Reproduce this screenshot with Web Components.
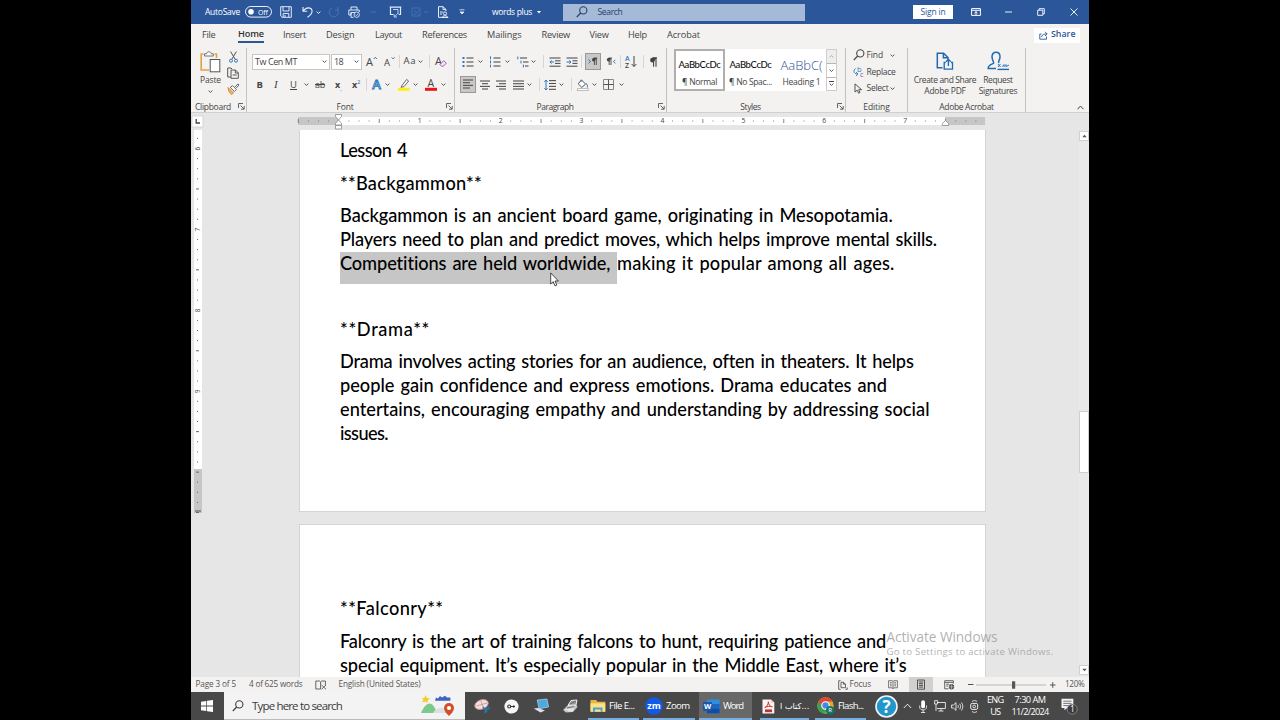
<!DOCTYPE html>
<html lang="en">
<head>
<meta charset="utf-8">
<title>words plus</title>
<style>
  body {
    margin: 0;
    width: 1280px;
    height: 720px;
    overflow: hidden;
    background: #000;
    font-family: "Open Sans", "Noto Sans", sans-serif;
    font-size: 8.5px;
    color: #444;
  }
</style>
</head>
<body>
<word-window></word-window>

<script>
const chev = '<path d="M.6 .6 2.5 2.4 4.4 .6" stroke="currentColor" fill="none" stroke-width=".9"/>';
const lines = (arr, color = '#505050') =>
  arr.map(([x1, x2, y]) => `<path d="M${x1} ${y}H${x2}" stroke="${color}" stroke-width="1.1"/>`).join('');

// name: [width, height, markup]
const ICONS = {
  chev: [5, 3, chev],
  launch: [7, 7, '<path d="M.5 5V.5H5M2.5 2.5 6 6M6.2 3V6.2H3" fill="none" stroke="#555" stroke-width=".9"/>'],
  toggle: [27, 12, '<rect x=".5" y=".5" width="26" height="10.6" rx="5.3" fill="none" stroke="#fff" stroke-width=".9"/><circle cx="6" cy="5.8" r="2.8" fill="#fff"/><text x="13" y="8.6" font-size="7.6" fill="#fff" textLength="10" lengthAdjust="spacingAndGlyphs">Off</text>'],
  save: [12, 12, '<path d="M.7 .7H11.3V11.3H2L.7 10ZM3 .7V5H9V.7M3.2 11V7.5H8.8V11M5 9V11" fill="none" stroke="#dfe9f7" stroke-width="1"/>'],
  undo: [12, 12, '<path d="M1 1V5.2H5.2M1.3 5C4 .8 9 1 10 4.3 10.8 7.5 8 9.5 5.5 11.3" fill="none" stroke="#e6eefa" stroke-width="1.1"/>'],
  redo: [12, 12, '<path d="M10 1V4H7M9.8 4A4.6 4.6 0 1 1 4 2" fill="none" stroke="#4a73b5" stroke-width="1"/>'],
  print: [12, 12, '<path d="M3 4V1H9V4M3 9H.8V4H11.2V6M3 9V6.5H7" fill="none" stroke="#dfe9f7"/><path d="M3 6.5V11.3H5.5" fill="none" stroke="#dfe9f7"/><circle cx="8.7" cy="8.7" r="2.7" fill="#2b579a" stroke="#dfe9f7" stroke-width=".9"/><path d="M7.4 8.7 8.4 9.7 10 7.9" fill="none" stroke="#dfe9f7" stroke-width=".8"/>'],
  present: [13, 12, '<path d="M.7 1.2H12.3M1.5 1.2V8.5H4.5M11.5 1.2V8.5H9.7" fill="none" stroke="#dfe9f7" stroke-width="1.2"/><path d="M4 3.5H9V8M8.8 7.5 5.4 10.8M5.2 8.3V11H8" fill="none" stroke="#bdd0ec"/>'],
  ghost: [18, 10, '<path d="M1 1H9V9H1ZM3 3 8 8M8 3 3 8M13 5H17" fill="none" stroke="#446fb2"/>'],
  dash: [6, 2, '<path d="M0 1H6" stroke="#446fb2"/>'],
  page: [12, 12, '<path d="M1.5 .7H6L9 3.5V5M1.5 .7V11.3H5M6 .7V3.5H9M3 6H6M3 8H5" fill="none" stroke="#e6eefa"/><circle cx="8" cy="7.5" r="1.6" fill="none" stroke="#e6eefa"/><path d="M5 11.5C5.5 9.3 10.5 9.3 11 11.5Z" fill="none" stroke="#e6eefa"/>'],
  more: [6, 6, '<path d="M.5 .8H5.5M1 3 3 5 5 3Z" fill="#e6eefa" stroke="#e6eefa" stroke-width=".8"/>'],
  caret: [4, 3, '<path d="M0 0H4L2 2.4Z" fill="#fff"/>'],
  find: [12, 12, '<circle cx="7.3" cy="4.4" r="3.6" fill="none" stroke="currentColor" stroke-width="1.1"/><path d="M4.7 7 .8 11" stroke="currentColor" stroke-width="1.1"/>'],
  ribbonOpts: [10, 8, '<path d="M.6 .6H9.4V7.4H.6ZM.6 2.3H9.4M5 7V3.7M3.4 5 5 3.6 6.6 5" fill="none" stroke="#fff" stroke-width="1"/>'],
  min: [7, 2, '<path d="M0 1H7" stroke="#fff" stroke-width=".9"/>'],
  restore: [8, 8, '<path d="M.7 2.2H5.8V7.3H.7ZM2.2 2V.7H7.3V5.8H6" fill="none" stroke="#fff" stroke-width=".9"/>'],
  close: [8, 8, '<path d="M.5 .5 7.5 7.5M7.5 .5 .5 7.5" stroke="#fff" stroke-width=".9"/>'],
  share: [9, 9, '<path d="M2.5 3H.8V8.2H7.5V5.5M2.6 6C3 3.5 5 3 8 3M6 .8 8.2 3 6 5" fill="none" stroke="#2b579a" stroke-width=".9"/>'],
  paste: [21, 22, '<path d="M3.5 3H1.2V19H9M14.5 3H16.5V7" fill="none" stroke="#e3a04b" stroke-width="1.6"/><path d="M4.5 5V2.8H6.5C7 0 10.8 0 11.3 2.8H13.3V5Z" fill="#fafafa" stroke="#666" stroke-width=".9"/><rect x="10.2" y="8.5" width="9.6" height="12.3" fill="#fff" stroke="#555"/>'],
  cut: [9, 12, '<path d="M1.6 .5 6 8M7.4 .5 3 8" stroke="#555" fill="none"/><circle cx="2" cy="9.7" r="1.5" fill="none" stroke="#2c77bd"/><circle cx="7" cy="9.7" r="1.5" fill="none" stroke="#2c77bd"/>'],
  copy: [12, 12, '<path d="M4 10H.7V1H4L5 2M4 3H8.5L11.3 5.8V11.3H4ZM8.3 3V6H11.3M5.7 8H9.6" fill="none" stroke="#555"/>'],
  painter: [13, 12, '<path d="M1 4.5 6.5 10 4.5 11.5 2 8.8Z" fill="#f3b66b" stroke="#e08a2c"/><path d="M3.3 4.5 5.5 2.7 9.3 6.5 7.4 8.5Z" fill="#fff" stroke="#555" stroke-width=".9"/><path d="M7.5 4.5 11 .9 12 2 8.6 5.6" fill="#fff" stroke="#555" stroke-width=".9"/>'],
  growA: [12, 12, '<path d="M7.7 3 9.3 1.4 10.9 3" fill="none" stroke="#2b579a" stroke-width=".9"/><text x="0" y="10" font-size="11" fill="#444">A</text>'],
  shrinkA: [12, 12, '<path d="M7.7 1.4 9.2 2.9 10.7 1.4" fill="none" stroke="#2b579a" stroke-width=".9"/><text x="0" y="10" font-size="9.5" fill="#444">A</text>'],
  clearA: [13, 13, '<text x="0" y="9.5" font-size="11" fill="#444">A</text><path d="M5 9.5 8.7 5.7 11.3 8.2 8.2 11.3H6.7Z" fill="#f3e4f6" stroke="#a04fae" stroke-width=".9"/>'],
  fxA: [12, 13, '<text x="1.2" y="11" font-size="13" font-weight="600" fill="#d7ebfb" stroke="#2476bd" stroke-width=".9">A</text>'],
  hilite: [13, 13, '<path d="M4 7.5 8.6 1.5 10.6 3 6 8.6 3 9.4Z" fill="#fff" stroke="#555" stroke-width=".9"/><rect x="0" y="9.8" width="11.5" height="3" fill="#ffee16"/>'],
  colorA: [13, 13, '<text x="2.6" y="8.6" font-size="10.5" fill="#444">A</text><rect x="0" y="9.8" width="12" height="3" fill="#e8141c"/>'],
  bullets: [12, 12, lines([[4.5, 11.5, 2], [4.5, 11.5, 6], [4.5, 11.5, 10]]) + '<path d="M.5 2H2.5M.5 6H2.5M.5 10H2.5" stroke="#2c77bd" stroke-width="2"/>'],
  numbers: [12, 12, lines([[4.5, 11.5, 2], [4.5, 11.5, 6], [4.5, 11.5, 10]]) + '<path d="M1.5 .4V3.4M1.5 4.6V7.4M1.5 8.6V11.4" stroke="#2c77bd"/>'],
  multi: [12, 12, lines([[3, 10, 2], [6, 11.5, 6], [8, 11.5, 10]]) + '<path d="M.8 .5V3.3M4 4.6V7.4M6.4 8.6V11.4" stroke="#2c77bd"/>'],
  outdent: [12, 10, lines([[.5, 11.5, 1], [6, 11.5, 3.8], [6, 11.5, 6.4], [.5, 11.5, 9.2]]) + '<path d="M5 5H1M2.6 3.3 .9 5 2.6 6.7" fill="none" stroke="#2c77bd"/>'],
  indent: [12, 10, lines([[.5, 11.5, 1], [6.5, 11.5, 3.8], [6.5, 11.5, 6.4], [.5, 11.5, 9.2]]) + '<path d="M.5 5H5M3.3 3.3 5 5 3.3 6.7" fill="none" stroke="#2c77bd"/>'],
  ltr: [16, 17, '<rect width="16" height="17" fill="#c9c8c7"/><rect x=".5" y=".5" width="15" height="16" fill="none" stroke="#999"/><path d="M3.5 6.5 5.5 8.4 3.5 10.3" fill="none" stroke="#2c77bd"/><path d="M11.6 5H8.7A1.7 1.7 0 0 0 8.7 8.4H9.5Z" fill="#444"/><path d="M12.2 5H8.7M9.4 5V12M11.3 5V12" fill="none" stroke="#444" stroke-width=".9"/>'],
  rtl: [10, 9, '<path d="M9.3 2.8 7.5 4.6 9.3 6.4" fill="none" stroke="#2c77bd"/><path d="M5.2 1H2.5A1.7 1.7 0 0 0 2.5 4.4H3.3Z" fill="#444"/><path d="M6 1H2.5M3.2 1V8M5 1V8" fill="none" stroke="#444" stroke-width=".9"/>'],
  sort: [13, 13, '<text x="0" y="6" font-size="7" font-weight="600" fill="#2c77bd">A</text><text x="0" y="12.5" font-size="7" font-weight="600" fill="#444">Z</text><path d="M9 1V11.5M6.6 9 9 11.5 11.4 9" fill="none" stroke="#444"/>'],
  pilcrow: [9, 10, '<path d="M7.6 .8H3.5A2.4 2.4 0 0 0 3.5 5.6H4.5Z" fill="#444"/><path d="M8 .8H3.5M4.6 .8V9.8M7 .8V9.8" fill="none" stroke="#444" stroke-width="1.1"/>'],
  alignL: [16, 17, '<rect width="16" height="17" fill="#c9c8c7"/><rect x=".5" y=".5" width="15" height="16" fill="none" stroke="#999"/>' + lines([[3, 13, 4], [3, 10, 6.7], [3, 13, 9.4], [3, 10, 12]])],
  alignC: [11, 10, lines([[0, 10, 1], [2, 8, 3.7], [0, 10, 6.4], [2, 8, 9]])],
  alignR: [11, 10, lines([[0, 10, 1], [3, 10, 3.7], [0, 10, 6.4], [3, 10, 9]])],
  alignJ: [11, 10, lines([[0, 11, 1], [0, 11, 3.7], [0, 11, 6.4], [0, 11, 9]])],
  spacing: [12, 12, lines([[5, 12, 1.6], [5, 12, 4.5], [5, 12, 7.4], [5, 12, 10.3]]) + '<path d="M2 1V11M.4 2.8 2 1 3.6 2.8M.4 9.2 2 11 3.6 9.2" fill="none" stroke="#2c77bd"/>'],
  shading: [12, 12, '<path d="M4.5 1 8.6 5 4.8 8.4 1.2 4.8Z" fill="#fff" stroke="#555"/><path d="M4 3V.8M9 4.5C10.6 5.2 10.6 7 10.3 8.6" fill="none" stroke="#2c77bd"/><rect x=".4" y="9.7" width="10.8" height="2" fill="#fff" stroke="#999" stroke-width=".6"/>'],
  borders: [11, 11, '<path d="M.5 .5H10.5V10.5H.5Z" fill="none" stroke="#888"/><path d="M5.5 .5V10.5M.5 5.5H10.5" stroke="#555"/>'],
  replace: [12, 12, '<text x="4" y="6" font-size="7.5" fill="#2c77bd">b</text><text x="7" y="11" font-size="7.5" fill="#8a50a8">c</text><path d="M2.6 2.5C0 4 .5 8 4.5 8M3 6 5 8 3 10" fill="none" stroke="#2c77bd" stroke-width=".9"/>'],
  select: [9, 11, '<path d="M1 .9V9L3.2 7.2 4.6 10.2 6 9.5 4.7 6.7H7.6Z" fill="none" stroke="#444" stroke-width=".9"/>'],
  pdf: [18, 19, '<path d="M6.5 15.8H1.3V1.2H7.6L12 5.5V7.8M7.4 1.2V5.7H12" fill="none" stroke="#1f69b3" stroke-width="1.5"/><path d="M9.7 10.5H8.2V17.2H16.5V10.5H15M12.4 14V7.8M10 9.7 12.4 7.4 14.8 9.7" fill="none" stroke="#1f69b3" stroke-width="1.3"/>'],
  sign: [23, 20, '<path d="M1.2 17C1.3 14 4.5 13.3 6.5 12.3 7.5 11.5 5 9.5 5 5.7 5 2.8 6.8 1.2 9 1.2S13 2.8 13 5.7C13 9.5 10.5 10.5 12 12M1.2 17V17.6H9" fill="none" stroke="#1f69b3" stroke-width="1.5"/><path d="M10.5 18.4H22" stroke="#1f69b3" stroke-width="1.4"/><path d="M11 13 13.5 16M13.5 13 11 16M15 15.7 17 13.6V15.6L19 13.6V15.6L22 14" fill="none" stroke="#1f69b3" stroke-width=".9"/>'],
  up: [7, 5, '<path d="M.6 4.2 3.5 1 6.4 4.2" fill="none" stroke="#444"/>'],
  proof: [12, 10, '<path d="M5.6 9H.8V1H4.5L5.6 2V9M5.6 2 6.8 1H10.4V5M6.5 5 11 9.3M11 5 6.5 9.3" fill="none" stroke="#555" stroke-width=".9"/>'],
  focus: [10, 10, '<path d="M2.6 .7H.7V9.3H2.6M7.4 9.3H9.3V7.5M3 2.3H5.5L7.5 4.2V7.7H3Z M5.5 2.3V4.2H7.5" fill="none" stroke="#555" stroke-width=".9"/>'],
  read: [10, 9, '<path d="M5 1.6V8.6M5 1.4 4 .7H.6V7.8H4L5 8.6 6 7.8H9.4V.7H6ZM2 2.6H3.7M2 4.2H3.7M2 5.8H3.7M6.3 2.6H8M6.3 4.2H8M6.3 5.8H8" fill="none" stroke="#555" stroke-width=".8"/>'],
  printView: [24, 15, '<rect width="24" height="15" fill="#d2d0ce"/><path d="M8.5 3H15.5V12.2H8.5ZM10 5H14M10 6.7H14M10 8.4H14M10 10.1H14" fill="none" stroke="#444" stroke-width=".9"/>'],
  web: [11, 10, '<path d="M4.5 8.8H.7V.7H9.3V3.5M.7 2.4H9.3M2.2 4.2H5M2.2 6H4" fill="none" stroke="#555" stroke-width=".9"/><circle cx="7.5" cy="6.8" r="2.7" fill="#555"/><path d="M5.3 6.8H9.7M7.5 4.4V9.2" stroke="#ddd" stroke-width=".5"/>'],
  minus: [6, 3, '<path d="M0 1.5H5.5" stroke="#555"/>'],
  plus: [6, 6, '<path d="M0 3H5.5M2.75 .2V5.8" stroke="#555"/>'],
  slider: [70, 8, '<path d="M0 4H70" stroke="#aaa" stroke-width=".8"/><rect x="36" y=".3" width="3.2" height="7.4" fill="#555"/>'],
  windows: [12, 12, '<path d="M0 1.7 5.3 .9V5.6H0ZM6 .8 12 0V5.6H6ZM0 6.4H5.3V11.1L0 10.3ZM6 6.4H12V12L6 11.2Z" fill="#fff"/>'],
  landscape: [36, 24, '<path d="M1 19C6 8 12 5 17 19Z" fill="#7cc98a"/><path d="M13 19C17 12 26 12 29 19Z" fill="#dcdfe3"/><path d="M5.5 1 6.8 4 10 4.6 7.6 6.6 7.4 9 5.5 7.6 2 8.6 3.4 6 2 4 4.4 3.9Z" fill="#f7c928"/><path d="M15 6.8 16 3.6 18 4.4 20 2 22 3.6 25 1.8 27 3.6 30.4 3.4V6.8Z" fill="#3f63c6"/><path d="M29 9A5 5 0 0 1 34 14C34 17 31 20 29 22 27 20 24 17 24 14A5 5 0 0 1 29 9Z" fill="#d1502a"/><circle cx="29" cy="14" r="2.1" fill="#fff"/>'],
  snip: [17, 15, '<ellipse cx="7.5" cy="5.5" rx="7" ry="4.6" transform="rotate(-20 7.5 5.5)" fill="#f1dedd" stroke="#c88f91" stroke-width=".9"/><path d="M2.5 7 13 4M7 2 9 8.5" stroke="#c88f91" stroke-width=".8"/><path d="M9 8 13 13M13 8.5 11 14" stroke="#2d79ad" stroke-width="1.6"/><circle cx="14" cy="9" r="1.5" fill="none" stroke="#2d79ad"/>'],
  key: [15, 15, '<circle cx="7.5" cy="7.5" r="7.1" fill="#f6f6f6"/><circle cx="5.2" cy="7.5" r="1.5" fill="none" stroke="#333" stroke-width="1.1"/><path d="M6.8 7.5H11M9.8 6.2V8.8" stroke="#333" stroke-width="1.1"/>'],
  pc: [17, 14, '<path d="M4.2 1 14 0 15.6 8 6 9.8Z" fill="#4ea9de" stroke="#bfe3f7" stroke-width=".6"/><path d="M.8 9.5 5 9 12 11.5 7.5 13.6Z" fill="#dce2e6"/>'],
  scan: [17, 15, '<path d="M1 11 6 6 14 5 15.5 8 11 13 4 13.5Z" fill="#c6c6c6"/><path d="M6 6.3 9 1.5 15 1 14 6Z" fill="#999" stroke="#eee"/><path d="M3.5 10.8 12 9.8M6 12 11 11.6" fill="none" stroke="#eee" stroke-width="1.2"/><path d="M8 5 14 2M5 9 12 7.5" stroke="#666" stroke-width=".9"/>'],
  folder: [16, 14, '<path d="M.5 1H6L7.5 2.8H15.3V12.5H.5Z" fill="#e8b540"/><path d="M.5 4.3H15.3V12.8H.5Z" fill="#fbe085"/><path d="M3 12.8V8.5H12.5V12.8H10.6V10.5H5V12.8Z" fill="#4c9fd8"/>'],
  zoom: [18, 18, '<circle cx="9" cy="9" r="8.8" fill="#1159e6"/><text x="2.2" y="12" font-size="9" font-weight="700" fill="#fff" textLength="13.5" lengthAdjust="spacingAndGlyphs">zm</text>'],
  word: [17, 15, '<rect x="4" y=".4" width="12.6" height="14" rx="1" fill="#2f8de0"/><path d="M4 5H16.6V9.8H4Z" fill="#1d66c0"/><path d="M4 9.7H16.6V14.4H4Z" fill="#154a9c"/><rect y="3" width="9" height="9" rx=".9" fill="#1a56b0"/><text x=".9" y="10" font-size="7.5" font-weight="700" fill="#fff">W</text>'],
  acrobat: [13, 15, '<path d="M.5 .4H9L12.3 3.6V14.6H.5Z" fill="#faf3f2"/><path d="M9 .4V3.6H12.3" fill="#e2c8c6"/><path d="M2.8 8.5C5 7.6 6.4 5.5 6.3 2.8 6.8 6 8 7.5 10.3 7.8 7.8 7 5.5 7.2 2.8 8.5Z" fill="none" stroke="#c8302c"/><rect x="3" y="10.4" width="7" height="2.8" fill="#b73836"/>'],
  chrome: [18, 18, '<circle cx="8.5" cy="8.5" r="8.2" fill="#e0ac28"/><path d="M1.4 4.4A8.2 8.2 0 0 1 15.6 4.4H8.5L4.6 9.8Z" fill="#e0453a"/><path d="M1.4 4.4A8.2 8.2 0 0 0 8 16.7L11 10.5 5 9.8Z" fill="#36a352"/><circle cx="8.5" cy="8.4" r="3.7" fill="#4588ee" stroke="#fff" stroke-width="1.1"/><circle cx="13.2" cy="13.2" r="4.3" fill="#16756a"/><text x="11.2" y="15.4" font-size="6" fill="#fff">R</text>'],
  help: [23, 23, '<circle cx="11.5" cy="11.5" r="10.5" fill="#2196c9" stroke="#f2f6f8" stroke-width="1.6"/><text x="7.4" y="17.6" font-size="17" font-weight="700" fill="#fff">?</text>'],
  trayUp: [9, 6, '<path d="M.8 5 4.5 1.2 8.2 5" fill="none" stroke="#eee"/>'],
  mic: [8, 13, '<rect x="2.2" y=".3" width="3.8" height="8" rx="1.9" fill="#fff"/><path d="M.7 5.5V7.3C.7 10.8 7.5 10.8 7.5 7.3V5.5M4.1 10V12.5M2 12.5H6.2" fill="none" stroke="#ddd"/>'],
  net: [12, 12, '<path d="M3 2.5H11.4V8.5H3M7 8.5V11M4.5 11H9.5M.6 .7H3.6V4H.6ZM2 4V11" fill="none" stroke="#eee" stroke-width=".9"/>'],
  sound: [13, 11, '<path d="M.6 4H2.5L5 1.6V9.4L2.5 7H.6ZM6.8 4C7.5 5 7.5 6 6.8 7M8.6 2.8C9.9 4.6 9.9 6.4 8.6 8.2M10.4 1.5C12.3 4 12.3 7 10.4 9.5" fill="none" stroke="#eee" stroke-width=".9"/>'],
  meet: [9, 13, '<path d="M2 1.5C3.5 .3 5.5 .3 7 1.5M2 11.5C3.5 12.7 5.5 12.7 7 11.5" fill="none" stroke="#ddd"/><rect x=".7" y="3.4" width="7" height="6" rx="1.5" fill="none" stroke="#eee"/><circle cx="4.2" cy="6.4" r="1.4" fill="none" stroke="#eee" stroke-width=".9"/>'],
  notify: [17, 17, '<path d="M.5 .8H12.3V10H6L3.5 12.3V10H.5Z" fill="#f4f4f4"/><path d="M2.3 3.2H10.5M2.3 5.4H10.5M2.3 7.6H8" stroke="#555" stroke-width=".8"/><circle cx="11.2" cy="11.2" r="5" fill="#3c3c3c" stroke="#999" stroke-width=".7"/><text x="9" y="14.2" font-size="8.5" fill="#fff">1</text>'],
  pointer: [9, 15, '<path d="M.7 .9V12L3.2 9.7 5 13.9 6.8 13.1 5 9H8.4Z" fill="#fff" stroke="#222" stroke-width=".8"/>'],
  tri: [5, 4, '<path d="M.3 3.3 2.5 .7 4.7 3.3Z" fill="#555"/>'],
};

class UiIcon extends HTMLElement {
  connectedCallback() {
    const [w, h, markup] = ICONS[this.getAttribute('name')];
    this.attachShadow({ mode: 'open' }).innerHTML = `
      <style>
        :host { display: block; flex: none; width: ${w}px; height: ${h}px; }
        svg { display: block; overflow: visible; }
      </style>
      <svg width="${w}" height="${h}" viewBox="0 0 ${w} ${h}">${markup}</svg>
    `;
  }
}

// Text run; with a w attribute the tracking is adjusted until the run is that wide
class UiLabel extends HTMLElement {
  connectedCallback() {
    this.attachShadow({ mode: 'open' }).innerHTML = `
      <style>
        :host { display: flex; flex: none; line-height: 1.3; }
        span { flex: none; white-space: pre; }
      </style>
      <span><slot></slot></span>
    `;
    const width = parseFloat(this.getAttribute('w'));
    if (!width) return;
    const span = this.shadowRoot.querySelector('span');
    const natural = span.getBoundingClientRect().width;
    span.style.letterSpacing = `${(width - natural) / this.textContent.length}px`;
    this.style.width = `${width}px`;
  }
}

// Grid row whose columns begin at the given tab stops
class TabRow extends HTMLElement {
  connectedCallback() {
    const stops = this.getAttribute('stops').split(' ').map(Number);
    const lead = stops[0] - Number(this.getAttribute('from') || 191);
    const tracks = stops.slice(1).map((s, i) => `${s - stops[i]}px`);
    this.attachShadow({ mode: 'open' }).innerHTML = `
      <style>
        :host {
          display: grid;
          box-sizing: border-box;
          grid-template-columns: ${tracks.join(' ')} max-content;
          padding-left: ${lead}px;
          align-items: center;
          justify-items: start;
        }
        ::slotted(i) { width: 1px; height: 13px; background: #d8d6d4; }
      </style>
      <slot></slot>
    `;
  }
}

class TitleBar extends HTMLElement {
  connectedCallback() {
    this.attachShadow({ mode: 'open' }).innerHTML = `
      <style>
        :host { display: block; height: 24px; background: #2b579a; color: #fff; }
        tab-row { height: 24px; }
        .search { width: 242px; height: 17px; background: #a5bad6; color: #23406f; }
        .search tab-row { height: 17px; }
        .signin { width: 40px; height: 14px; background: #fff; color: #2b579a; display: grid; place-items: center; }
      </style>
      <tab-row stops="205 245 280 302 316 328 348 370 389 411 437 459 492 537 563 913 971 1005 1037 1070">
        <ui-label w="35">AutoSave</ui-label>
        <ui-icon name="toggle"></ui-icon>
        <ui-icon name="save"></ui-icon>
        <ui-icon name="undo"></ui-icon>
        <ui-icon name="chev"></ui-icon>
        <ui-icon name="redo"></ui-icon>
        <ui-icon name="print"></ui-icon>
        <ui-icon name="dash"></ui-icon>
        <ui-icon name="present"></ui-icon>
        <ui-icon name="ghost"></ui-icon>
        <ui-icon name="page"></ui-icon>
        <ui-icon name="more"></ui-icon>
        <ui-label w="40">words plus</ui-label>
        <ui-icon name="caret"></ui-icon>
        <div class="search">
          <tab-row from="563" stops="576 597.5">
            <ui-icon name="find"></ui-icon>
            <ui-label w="25">Search</ui-label>
          </tab-row>
        </div>
        <div class="signin"><ui-label w="25">Sign in</ui-label></div>
        <ui-icon name="ribbonOpts"></ui-icon>
        <ui-icon name="min"></ui-icon>
        <ui-icon name="restore"></ui-icon>
        <ui-icon name="close"></ui-icon>
      </tab-row>
    `;
  }
}

class RibbonTabs extends HTMLElement {
  connectedCallback() {
    this.attachShadow({ mode: 'open' }).innerHTML = `
      <style>
        :host { display: block; height: 22px; background: #f3f2f1; font-size: 9.2px; }
        tab-row { height: 22px; }
        .on { font-weight: 600; color: #333; border-bottom: 2px solid #2b579a; padding: 3px 0 1px; margin-top: -2px; }
        .share { display: flex; gap: 3px; align-items: center; width: 46px; height: 15px; padding-left: 5px; box-sizing: border-box; background: #fff; color: #2b579a; font-weight: 600; font-size: 8.8px; }
      </style>
      <tab-row stops="202 238 283 326 375 422 487 541.5 589.5 628 667 1034">
        <ui-label w="13.5">File</ui-label>
        <ui-label class="on" w="26">Home</ui-label>
        <ui-label w="23">Insert</ui-label>
        <ui-label w="28.5">Design</ui-label>
        <ui-label w="27">Layout</ui-label>
        <ui-label w="45">References</ui-label>
        <ui-label w="34.5">Mailings</ui-label>
        <ui-label w="28.5">Review</ui-label>
        <ui-label w="19">View</ui-label>
        <ui-label w="19">Help</ui-label>
        <ui-label w="33">Acrobat</ui-label>
        <div class="share"><ui-icon name="share"></ui-icon><ui-label w="24.5">Share</ui-label></div>
      </tab-row>
    `;
  }
}

class RibbonGroup extends HTMLElement {
  connectedCallback() {
    const launcher = this.hasAttribute('launcher') ? '<ui-icon name="launch"></ui-icon>' : '';
    this.attachShadow({ mode: 'open' }).innerHTML = `
      <style>
        :host { display: flex; flex-direction: column; flex: none; box-sizing: border-box; height: 64px; margin-top: 2px; border-right: 1px solid #c4c2c0; }
        .body { height: 53px; }
        .foot { display: flex; height: 11px; margin-top: 2px; align-items: center; }
        .foot div { flex: 1; display: flex; justify-content: center; }
        :host([launcher]) .foot div { padding-right: 3px; }
        ui-icon { margin-right: 1px; }
      </style>
      <div class="body"><slot></slot></div>
      <div class="foot"><div><ui-label w="${this.getAttribute('w')}">${this.getAttribute('label')}</ui-label></div>${launcher}</div>
    `;
  }
}

class StyleCard extends HTMLElement {
  connectedCallback() {
    this.attachShadow({ mode: 'open' }).innerHTML = `
      <style>
        :host { display: flex; flex-direction: column; align-items: center; box-sizing: border-box; width: 51px; height: 42px; padding-top: 7px; border: 2px solid transparent; }
        :host([on]) { border-color: #b1afad; }
        .sample { display: flex; align-items: center; width: 42px; height: 14px; color: #111; font-family: Lato, sans-serif; font-weight: 500; font-size: 9.5px; }
        :host([heading]) .sample { font: 300 13px "Open Sans", sans-serif; color: #2f5496; }
        .name { margin-top: 4px; }
      </style>
      <div class="sample"><slot name="sample"></slot></div>
      <div class="name"><slot></slot></div>
    `;
  }
}

class WordRibbon extends HTMLElement {
  connectedCallback() {
    this.attachShadow({ mode: 'open' }).innerHTML = `
      <style>
        :host { display: flex; height: 67px; background: #f3f2f1; border-bottom: 1px solid #d2d0ce; box-sizing: border-box; }
        .clip { display: grid; grid-template-columns: 33px 20px; }
        .paste { display: flex; flex-direction: column; align-items: center; padding: 3px 0 0 6px; gap: 1px; }
        .paste ui-icon:last-child { margin-top: 4px; }
        .side { display: flex; flex-direction: column; gap: 4px; padding: 3px 0 0 3px; }
        .r1 { height: 17px; margin-top: 5px; }
        .r2 { height: 17px; margin-top: 6px; }
        .box { display: flex; align-items: center; justify-content: space-between; box-sizing: border-box; height: 16px; padding: 0 2px; background: #fff; border: 1px solid #c8c6c4; font-size: 9px; }
        b, em, u, s { font-size: 9.5px; line-height: 13px; }
        em { font-family: "Liberation Serif", serif; font-size: 11px; }
        s { font-size: 9px; letter-spacing: -.3px; }
        .sb { font-weight: 700; font-size: 9px; line-height: 13px; }
        .sb small { font-size: 5.5px; font-weight: 400; color: #2b579a; line-height: 0; }
        .gallery { display: flex; width: 163px; height: 42px; margin: 1px 0 0 7px; background: #fff; }
        .steps { display: grid; grid-template-rows: repeat(3, 1fr); width: 11px; margin-left: -1px; border: 1px solid #d0cecc; box-sizing: border-box; background: #fff; }
        .steps div { display: grid; place-items: center; color: #444; }
        .steps div + div { border-top: 1px solid #b8b6b4; }
        .steps div:first-child { background: #eee; }
        .edit tab-row { height: 16px; }
        .edit tab-row:first-child { margin-top: -1px; margin-bottom: 1px; }
        .adobe { display: grid; grid-template-columns: 64px 39px; column-gap: 1.5px; padding: 3px 0 0 5px; }
        .adobe div { display: flex; flex-direction: column; align-items: center; }
        .adobe ui-icon { height: 23px; }
        .end { display: flex; flex: 1; align-items: flex-end; justify-content: flex-end; padding: 0 5px 2px 0; }
      </style>
      <ribbon-group style="width:56px" label="Clipboard" w="36" launcher>
        <div class="clip">
          <div class="paste"><ui-icon name="paste"></ui-icon><ui-label w="21">Paste</ui-label><ui-icon name="chev"></ui-icon></div>
          <div class="side"><ui-icon name="cut" style="margin-left:2px"></ui-icon><ui-icon name="copy"></ui-icon><ui-icon name="painter"></ui-icon></div>
        </div>
      </ribbon-group>

      <ribbon-group style="width:208px" label="Font" w="17" launcher>
        <tab-row class="r1" from="247" stops="252 331 366 384 399 403.5 418 429 435">
          <div class="box" style="width:78px"><ui-label w="42">Tw Cen MT</ui-label><ui-icon name="chev"></ui-icon></div>
          <div class="box" style="width:31px"><ui-label w="9">18</ui-label><ui-icon name="chev"></ui-icon></div>
          <ui-icon name="growA"></ui-icon>
          <ui-icon name="shrinkA"></ui-icon>
          <i></i>
          <ui-label w="13" style="font-size:9.5px">Aa</ui-label>
          <ui-icon name="chev"></ui-icon>
          <i></i>
          <ui-icon name="clearA"></ui-icon>
        </tab-row>
        <tab-row class="r2" from="247" stops="256.5 274 290 303.5 315 335 352 366 371 385 398 413 425 440.5">
          <b>B</b><em>I</em><u>U</u>
          <ui-icon name="chev"></ui-icon>
          <s>ab</s>
          <span class="sb">x<small style="vertical-align:sub">,</small></span>
          <span class="sb">x<small style="vertical-align:super">2</small></span>
          <i></i>
          <ui-icon name="fxA"></ui-icon><ui-icon name="chev"></ui-icon>
          <ui-icon name="hilite"></ui-icon><ui-icon name="chev"></ui-icon>
          <ui-icon name="colorA"></ui-icon><ui-icon name="chev"></ui-icon>
        </tab-row>
      </ribbon-group>

      <ribbon-group style="width:212px" label="Paragraph" w="37" launcher>
        <tab-row class="r1" from="455" stops="462 478 489 505 517 531 543 549 566 581 585 606 620 625 643 649">
          <ui-icon name="bullets"></ui-icon><ui-icon name="chev"></ui-icon>
          <ui-icon name="numbers"></ui-icon><ui-icon name="chev"></ui-icon>
          <ui-icon name="multi"></ui-icon><ui-icon name="chev"></ui-icon>
          <i></i>
          <ui-icon name="outdent"></ui-icon><ui-icon name="indent"></ui-icon>
          <i></i>
          <ui-icon name="ltr"></ui-icon><ui-icon name="rtl"></ui-icon>
          <i></i>
          <ui-icon name="sort"></ui-icon>
          <i></i>
          <ui-icon name="pilcrow"></ui-icon>
        </tab-row>
        <tab-row class="r2" from="455" stops="460 480 496 513 527 539 544 559 571 577 592 603 619">
          <ui-icon name="alignL"></ui-icon><ui-icon name="alignC"></ui-icon><ui-icon name="alignR"></ui-icon>
          <ui-icon name="alignJ"></ui-icon><ui-icon name="chev"></ui-icon>
          <i></i>
          <ui-icon name="spacing"></ui-icon><ui-icon name="chev"></ui-icon>
          <i></i>
          <ui-icon name="shading"></ui-icon><ui-icon name="chev"></ui-icon>
          <ui-icon name="borders"></ui-icon><ui-icon name="chev"></ui-icon>
        </tab-row>
      </ribbon-group>

      <ribbon-group style="width:179px" label="Styles" w="20.5" launcher>
        <div class="gallery">
          <style-card on><ui-label slot="sample" w="42">AaBbCcDc</ui-label><ui-label w="35">¶ Normal</ui-label></style-card>
          <style-card><ui-label slot="sample" w="42">AaBbCcDc</ui-label><ui-label w="43">¶ No Spac...</ui-label></style-card>
          <style-card heading><ui-label slot="sample" w="42">AaBbC(</ui-label><ui-label w="38">Heading 1</ui-label></style-card>
          <div class="steps">
            <div><ui-icon name="chev" style="transform:rotate(180deg);opacity:.4"></ui-icon></div>
            <div><ui-icon name="chev"></ui-icon></div>
            <div><ui-icon name="chev" style="border-top:1px solid #444;padding-top:1px"></ui-icon></div>
          </div>
        </div>
      </ribbon-group>

      <ribbon-group style="width:62px" label="Editing" w="26.5">
        <div class="edit">
          <tab-row from="846" stops="853 866.5 890"><ui-icon name="find"></ui-icon><ui-label w="16.5">Find</ui-label><ui-icon name="chev"></ui-icon></tab-row>
          <tab-row from="846" stops="853 866.5"><ui-icon name="replace"></ui-icon><ui-label w="29">Replace</ui-label></tab-row>
          <tab-row from="846" stops="854 866.5 890"><ui-icon name="select"></ui-icon><ui-label w="22">Select</ui-label><ui-icon name="chev"></ui-icon></tab-row>
        </div>
      </ribbon-group>

      <ribbon-group style="width:118px" label="Adobe Acrobat" w="54.5">
        <div class="adobe">
          <div><ui-icon name="pdf" style="margin-top:1px;height:22px"></ui-icon><ui-label w="62.5">Create and Share</ui-label><ui-label w="41.5">Adobe PDF</ui-label></div>
          <div><ui-icon name="sign"></ui-icon><ui-label w="29.5">Request</ui-label><ui-label w="38.5">Signatures</ui-label></div>
        </div>
      </ribbon-group>
      <div class="end"><ui-icon name="up"></ui-icon></div>
    `;
  }
}

// Inch scale drawn along one axis, 80.9px per inch at 120% zoom
class InchRuler extends HTMLElement {
  connectedCallback() {
    const inch = 80.9;
    const vertical = this.hasAttribute('vertical');
    let marks = '';
    if (vertical) {
      for (let i = -1; i < 37; i++) {
        const y = 18.5 + i * inch / 8;
        if (i >= 0 && i % 8 === 0 && i / 8 < 4) {
          marks += `<text transform="translate(8.8 ${y + 2}) rotate(-90)" font-size="6.5" fill="#444">${[6, 7, 8, 9][i / 8]}</text>`;
        } else if (y < 384) {
          marks += `<path d="M${i % 4 ? 6 : 5} ${y}h${i % 4 ? 1 : 3}" stroke="#666"/>`;
        }
      }
      marks = `<rect x="3" y="0" width="8" height="339" fill="#fff"/><rect x="3" y="339" width="8" height="44" fill="#c6c6c6"/>${marks}<path d="M4 381H10" stroke="#555"/>`;
    } else {
      for (let i = -4; i <= 63; i++) {
        const x = 147.8 + i * inch / 8;
        if (i > 0 && i % 8 === 0) {
          marks += `<text x="${x - 1.9}" y="10.4" font-size="6.8" fill="#444">${i / 8}</text>`;
        } else if (i && x < 792) {
          marks += `<path d="M${x} ${i % 4 ? 7.5 : 6}v${i % 4 ? 1 : 4}" stroke="#777" stroke-width=".9"/>`;
        }
      }
      marks = `
        <rect x="1" y="3" width="11" height="11" fill="#fff" stroke="#d0d0d0" stroke-width=".8"/><path d="M5.2 6V10H9" fill="none" stroke="#444" stroke-width="1.3"/>
        <rect x="107" y="4" width="687" height="8" fill="#c6c6c6"/><rect x="147" y="4" width="607" height="8" fill="#fff"/>${marks}
        <g fill="#fff" stroke="#888" stroke-width=".8"><path d="M144.5 1.5H150.5V3.5L147.5 7 144.5 3.5ZM147.5 7 150.5 10.3V12H144.5V10.3ZM144.5 12.5H150.5V16H144.5Z"/><path d="M754.5 7.5 757.7 10.5V12.5H751.3V10.5Z"/></g>`;
    }
    const [w, h] = vertical ? [13, 547] : [898, 17];
    this.attachShadow({ mode: 'open' }).innerHTML = `
      <style>
        :host { display: block; flex: none; width: ${w}px; height: ${h}px; background: #e6e6e6; }
        svg { display: block; }
      </style>
      <svg width="${w}" height="${h}">${marks}</svg>
    `;
  }
}

class DocPage extends HTMLElement {
  connectedCallback() {
    this.attachShadow({ mode: 'open' }).innerHTML = `
      <style>
        :host { display: block; box-sizing: border-box; width: 687px; padding-left: 40px; background: #fff; border: 1px solid #d4d4d4; overflow: hidden; color: #000; font: 500 18.2px/24px Lato, sans-serif; word-spacing: 1.5px; }
        ::slotted(p) { margin: 0 0 8.7px; min-height: 24px; }
      </style>
      <slot></slot>
    `;
  }
}

class DocView extends HTMLElement {
  connectedCallback() {
    this.attachShadow({ mode: 'open' }).innerHTML = `
      <style>
        :host { display: flex; position: relative; height: 547px; background: #e6e6e6; overflow: hidden; }
        .pages { margin-left: 95px; }
        doc-page ui-label { line-height: 24px; }
        .one { height: 382px; padding-top: 8px; border-top: 0; }
        .two { height: 160px; margin-top: 12px; padding-top: 71px; }
        .mixed { display: flex; }
        .sel { background: linear-gradient(#c6c6c6, #c6c6c6) 0 1px no-repeat; height: 33px; margin-bottom: -9px; }
        .bar { display: flex; flex-direction: column; width: 10px; margin-left: auto; background: #e9e9e9; }
        .btn { display: grid; place-items: center; width: 10px; height: 10px; margin-top: 1px; background: #fff; box-sizing: border-box; border: 1px solid #d0d0d0; }
        .thumb { height: 62px; margin-top: 270px; background: #fff; border: 1px solid #cfcfcf; box-sizing: border-box; }
        .mouse { position: absolute; left: 359px; top: 142px; }
        .mark { position: absolute; left: 695.5px; top: 497.5px; color: rgba(150, 150, 150, .75); }
        .mark ui-label:first-child { font-size: 13.6px; }
        .mark ui-label:last-child { font-size: 9.6px; margin-top: 1px; }
      </style>
      <inch-ruler vertical></inch-ruler>
      <div class="pages">
        <doc-page class="one">
          <p><ui-label w="67">Lesson 4</ui-label></p>
          <p><ui-label w="142">**Backgammon**</ui-label></p>
          <p>
            <ui-label w="553">Backgammon is an ancient board game, originating in Mesopotamia.</ui-label>
            <ui-label w="597">Players need to plan and predict moves, which helps improve mental skills.</ui-label>
            <span class="mixed"><ui-label class="sel" w="277">Competitions are held worldwide, </ui-label><ui-label w="277.5">making it popular among all ages.</ui-label></span>
          </p>
          <p></p>
          <p><ui-label w="90">**Drama**</ui-label></p>
          <p>
            <ui-label w="573.5">Drama involves acting stories for an audience, often in theaters. It helps</ui-label>
            <ui-label w="547">people gain confidence and express emotions. Drama educates and</ui-label>
            <ui-label w="589.5">entertains, encouraging empathy and understanding by addressing social</ui-label>
            <ui-label w="48">issues.</ui-label>
          </p>
        </doc-page>
        <doc-page class="two">
          <p><ui-label w="103.5">**Falconry**</ui-label></p>
          <p>
            <ui-label w="546.5">Falconry is the art of training falcons to hunt, requiring patience and</ui-label>
            <ui-label w="566.5">special equipment. It’s especially popular in the Middle East, where it’s</ui-label>
          </p>
        </doc-page>
      </div>
      <div class="bar">
        <div class="btn"><ui-icon name="tri"></ui-icon></div>
        <div class="thumb"></div>
        <div class="btn" style="margin-top:192px"><ui-icon name="tri" style="transform:rotate(180deg)"></ui-icon></div>
      </div>
      <ui-icon class="mouse" name="pointer"></ui-icon>
      <div class="mark"><ui-label w="111">Activate Windows</ui-label><ui-label w="167">Go to Settings to activate Windows.</ui-label></div>
    `;
  }
}

class StatusBar extends HTMLElement {
  connectedCallback() {
    this.attachShadow({ mode: 'open' }).innerHTML = `
      <style>
        :host { display: block; height: 15px; background: #f3f2f1; font-size: 8.2px; color: #555; }
        tab-row { height: 15px; }
      </style>
      <tab-row stops="195.5 249 315 338.5 838 849.5 888 909 944 967.5 976 1050 1065">
        <ui-label w="40.5">Page 3 of 5</ui-label>
        <ui-label w="53.5">4 of 625 words</ui-label>
        <ui-icon name="proof"></ui-icon>
        <ui-label w="82">English (United States)</ui-label>
        <ui-icon name="focus"></ui-icon>
        <ui-label w="21.5">Focus</ui-label>
        <ui-icon name="read"></ui-icon>
        <ui-icon name="printView"></ui-icon>
        <ui-icon name="web"></ui-icon>
        <ui-icon name="minus"></ui-icon>
        <ui-icon name="slider"></ui-icon>
        <ui-icon name="plus"></ui-icon>
        <ui-label w="19.5">120%</ui-label>
      </tab-row>
    `;
  }
}

class TaskApp extends HTMLElement {
  connectedCallback() {
    this.attachShadow({ mode: 'open' }).innerHTML = `
      <style>
        :host { display: flex; align-items: center; gap: 3px; box-sizing: border-box; height: 28px; padding: 2px 0 0 2px; border-bottom: 2px solid #79aede; }
        :host([on]) { background: #686868; padding-left: 4px; }
      </style>
      <slot></slot>
    `;
  }
}

class TaskBar extends HTMLElement {
  connectedCallback() {
    this.attachShadow({ mode: 'open' }).innerHTML = `
      <style>
        :host { display: block; height: 28px; background: #484848; color: #fff; font-size: 9.6px; }
        tab-row { height: 28px; }
        .search { width: 241px; height: 28px; background: #f3f3f3; color: #3a3a3a; font-size: 11.5px; border-bottom: 1px solid #bbb; box-sizing: border-box; }
        .clock { display: flex; flex-direction: column; align-items: center; font-size: 9.2px; }
      </style>
      <tab-row stops="201 224 474 504 533 562 588 643 699 760 815 875 903 919 934 951 970 987 1011.5 1061">
        <ui-icon name="windows"></ui-icon>
        <div class="search">
          <tab-row from="224" stops="232 252 420">
            <ui-icon name="find"></ui-icon>
            <ui-label w="90">Type here to search</ui-label>
            <ui-icon name="landscape"></ui-icon>
          </tab-row>
        </div>
        <ui-icon name="snip"></ui-icon>
        <ui-icon name="key"></ui-icon>
        <ui-icon name="pc"></ui-icon>
        <ui-icon name="scan"></ui-icon>
        <task-app style="width:51px"><ui-icon name="folder"></ui-icon><ui-label w="25.5">File E...</ui-label></task-app>
        <task-app style="width:52px"><ui-icon name="zoom"></ui-icon><ui-label w="23.5">Zoom</ui-label></task-app>
        <task-app on style="width:53px"><ui-icon name="word"></ui-icon><ui-label w="20">Word</ui-label></task-app>
        <task-app style="width:49px;gap:5px"><ui-icon name="acrobat"></ui-icon><ui-label style="font-size:8.2px;font-family:'DejaVu Sans',sans-serif">كتاب ا...</ui-label></task-app>
        <task-app style="width:51px"><ui-icon name="chrome"></ui-icon><ui-label w="25.5">Flash...</ui-label></task-app>
        <ui-icon name="help"></ui-icon>
        <ui-icon name="trayUp"></ui-icon>
        <ui-icon name="mic"></ui-icon>
        <ui-icon name="net"></ui-icon>
        <ui-icon name="sound"></ui-icon>
        <ui-icon name="meet"></ui-icon>
        <div class="clock"><ui-label w="16.5">ENG</ui-label><ui-label w="10">US</ui-label></div>
        <div class="clock"><ui-label w="31">7:30 AM</ui-label><ui-label w="37">11/2/2024</ui-label></div>
        <ui-icon name="notify"></ui-icon>
      </tab-row>
    `;
  }
}

class WordWindow extends HTMLElement {
  connectedCallback() {
    this.attachShadow({ mode: 'open' }).innerHTML = `
      <style>
        :host { display: block; width: 898px; height: 720px; margin-left: 191px; overflow: hidden; }
      </style>
      <title-bar></title-bar>
      <ribbon-tabs></ribbon-tabs>
      <word-ribbon></word-ribbon>
      <inch-ruler></inch-ruler>
      <doc-view></doc-view>
      <status-bar></status-bar>
      <task-bar></task-bar>
    `;
  }
}

customElements.define('ui-icon', UiIcon);
customElements.define('ui-label', UiLabel);
customElements.define('tab-row', TabRow);
customElements.define('style-card', StyleCard);
customElements.define('ribbon-group', RibbonGroup);
customElements.define('inch-ruler', InchRuler);
customElements.define('doc-page', DocPage);
customElements.define('task-app', TaskApp);
customElements.define('title-bar', TitleBar);
customElements.define('ribbon-tabs', RibbonTabs);
customElements.define('word-ribbon', WordRibbon);
customElements.define('doc-view', DocView);
customElements.define('status-bar', StatusBar);
customElements.define('task-bar', TaskBar);
customElements.define('word-window', WordWindow);
</script>
</body>
</html>
